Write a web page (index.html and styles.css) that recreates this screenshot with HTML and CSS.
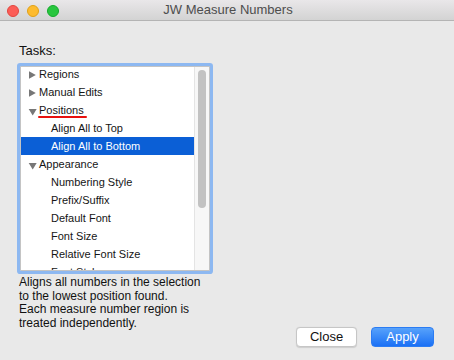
FILE: index.html
```html
<!DOCTYPE html>
<html>
<head>
<meta charset="utf-8">
<link rel="stylesheet" href="styles.css">
</head>
<body>
<div class="window">
  <div class="titlebar">
    <div class="lights">
      <span class="light red"></span>
      <span class="light yellow"></span>
      <span class="light green"></span>
    </div>
    <div class="title">JW Measure Numbers</div>
    <div></div>
  </div>
  <div class="content">
    <div class="label">Tasks:</div>
    <div class="list">
      <div class="rows">
        <div class="row l1"><svg class="tog" viewBox="0 0 10 18"><polygon points="0,6.3 6.8,10 0,13.7"/></svg>Regions</div>
        <div class="row l1"><svg class="tog" viewBox="0 0 10 18"><polygon points="0,6.3 6.8,10 0,13.7"/></svg>Manual Edits</div>
        <div class="row l1"><svg class="tog" viewBox="0 0 10 18"><polygon points="-0.3,8 7.7,8 3.7,14.5"/></svg><span class="marked">Positions</span></div>
        <div class="row l2">Align All to Top</div>
        <div class="row l2 selected">Align All to Bottom</div>
        <div class="row l1"><svg class="tog" viewBox="0 0 10 18"><polygon points="-0.3,8 7.7,8 3.7,14.5"/></svg>Appearance</div>
        <div class="row l2">Numbering Style</div>
        <div class="row l2">Prefix/Suffix</div>
        <div class="row l2">Default Font</div>
        <div class="row l2">Font Size</div>
        <div class="row l2">Relative Font Size</div>
        <div class="row l2">Font Style</div>
      </div>
      <div class="scroller"><div class="thumb"></div></div>
    </div>
    <div class="footer">
      <p class="desc">Aligns all numbers in the selection<br>to the lowest position found.<br>Each measure number region is<br>treated independently.</p>
      <div class="buttons">
        <button class="btn close">Close</button>
        <button class="btn apply">Apply</button>
      </div>
    </div>
  </div>
</div>
</body>
</html>
```

FILE: styles.css
```css
* { box-sizing: border-box; }
html, body {
  margin: 0;
  padding: 0;
}
body {
  width: 454px;
  height: 360px;
  overflow: hidden;
  background: #e9e9e9;
  font-family: "Liberation Sans", Arial, sans-serif;
  color: #1a1a1a;
}
.window {
  display: flex;
  flex-direction: column;
  height: 360px;
}
.titlebar {
  height: 21px;
  display: grid;
  grid-template-columns: 1fr auto 1fr;
  align-items: center;
  background: linear-gradient(#e9e7e9, #d3d3d3);
  border-bottom: 1px solid #b4b4b4;
}
.lights {
  display: flex;
  gap: 8px;
  padding-left: 7px;
  padding-top: 1px;
}
.light {
  width: 12px;
  height: 12px;
  border-radius: 50%;
}
.red { background: #fc5d57; border: 0.5px solid #e2463f; }
.yellow { background: #fdbb2e; border: 0.5px solid #e1a116; }
.green { background: #29c63f; border: 0.5px solid #14ab2b; }
.title {
  font-size: 13px;
  color: #4d4d4d;
  line-height: 16px;
  padding-left: 2px;
}
.content {
  flex: 1;
  display: flex;
  flex-direction: column;
  padding: 22px 20px 13px 20px;
}
.label {
  font-size: 13px;
  line-height: 16px;
  margin-left: -1px;
  color: #111;
}
.list {
  margin-top: 7px;
  width: 190px;
  height: 205px;
  border: 1px solid #c4c4c4;
  box-shadow: 0 0 0 3px #8db8f1;
  border-radius: 1px;
  background: #fff;
  display: flex;
  overflow: hidden;
}
.rows {
  flex: 1;
  margin-top: -2px;
  overflow: hidden;
}
.row {
  height: 18px;
  line-height: 18px;
  font-size: 11px;
  white-space: nowrap;
  display: flex;
  align-items: center;
  color: #151515;
}
.l1 { padding-left: 8px; }
.l2 { padding-left: 30px; }
.tog {
  width: 10px;
  height: 18px;
  fill: #777;
  flex: none;
  overflow: visible;
}
.selected {
  background: #0b5fd6;
  color: #fff;
}
.marked {
  position: relative;
  display: inline-block;
}
.marked::after {
  content: "";
  position: absolute;
  left: -1px;
  right: -3px;
  bottom: 1px;
  height: 2px;
  border-radius: 1px;
  background: #e8110f;
}
.scroller {
  width: 15px;
  flex: none;
  background: #f7f7f7;
  border-left: 1px solid #e4e4e4;
  padding: 3px 0 0 3px;
}
.thumb {
  width: 8px;
  height: 138px;
  border-radius: 4px;
  background: #c2c2c2;
}
.footer {
  flex: 1;
  display: flex;
  justify-content: space-between;
}
.desc {
  margin: 5px 0 0 -1px;
  font-size: 12px;
  line-height: 13.7px;
  color: #111;
  align-self: flex-start;
}
.buttons {
  align-self: flex-end;
  display: flex;
  gap: 14px;
}
.btn {
  height: 20px;
  padding: 0;
  font-family: "Liberation Sans", Arial, sans-serif;
  font-size: 13px;
  line-height: 18px;
  border-radius: 4px;
}
.close {
  width: 61px;
  background: #fff;
  color: #111;
  border: 1px solid #c6c6c6;
  box-shadow: 0 0.5px 1px rgba(0,0,0,0.12);
}
.apply {
  width: 63px;
  background: linear-gradient(#57a2fb, #1a70f5);
  color: #fff;
  border: 1px solid #2b7cf3;
}
```
